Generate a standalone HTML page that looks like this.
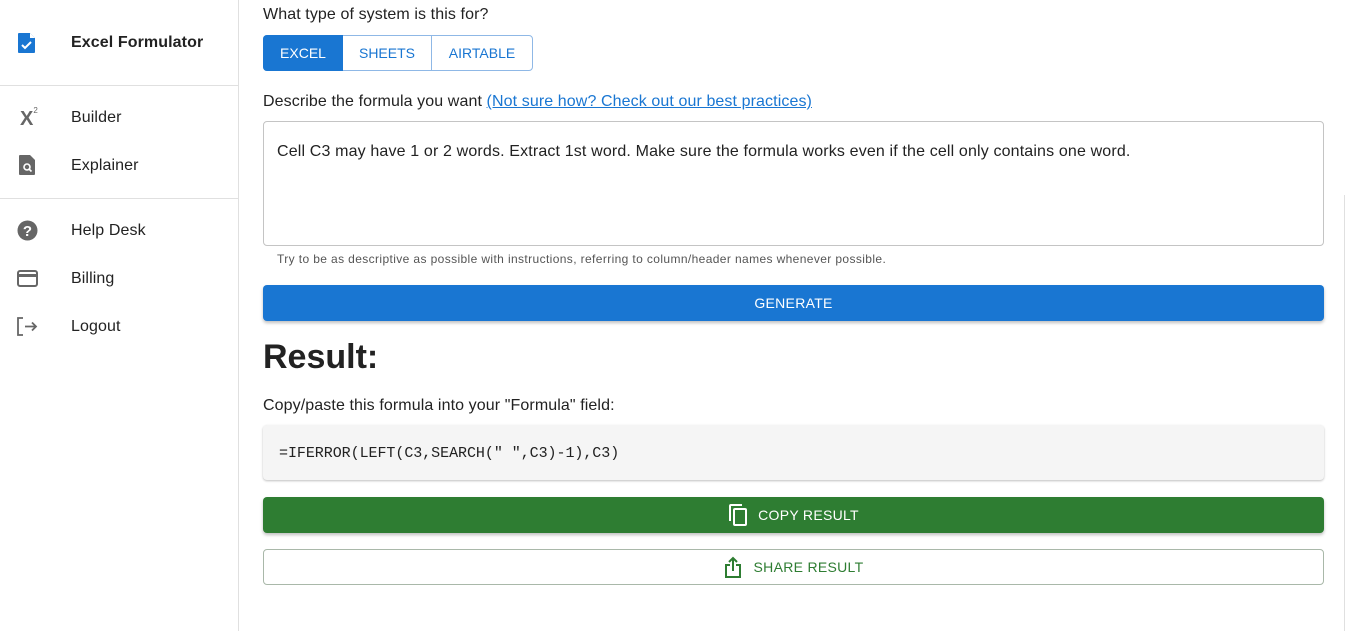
<!DOCTYPE html>
<html><head><style>
*{box-sizing:border-box;margin:0;padding:0}
body{width:1352px;height:631px;overflow:hidden;font-family:"Liberation Sans",Arial,sans-serif;background:#fff;position:relative;color:#222}
.side{position:absolute;left:0;top:0;width:239px;height:631px;border-right:1px solid #e0e0e0}
.hr{position:absolute;left:0;width:238px;height:1px;background:#e0e0e0}
.it{position:absolute;left:71px;font-size:16px;color:#222;letter-spacing:.1px}
.ic{position:absolute;left:17px}
.m{position:absolute}
.btn{position:absolute;left:263px;width:1061px;height:36px;border-radius:4px;font-size:14px;display:flex;align-items:center;justify-content:center;letter-spacing:.3px}
</style></head><body>
<div class="side">
<svg class="ic" style="top:32px" width="20" height="22" viewBox="0 0 20 22"><path d="M2 1h11l5 5v14a1 1 0 0 1-1 1H2a1 1 0 0 1-1-1V2a1 1 0 0 1 1-1z" fill="#1976d2"/><path d="M13 1v5h5z" fill="#fff"/><path d="M5 13l3 3 6-6" stroke="#fff" stroke-width="2" fill="none"/></svg>
<div class="it" style="top:34px;font-weight:bold">Excel Formulator</div>
<div class="hr" style="top:85px"></div>
<div class="ic" style="top:108px;left:20px;font-size:20px;color:#666;font-weight:bold">X<sup style="font-size:8px;position:relative;top:-4px;font-weight:normal">2</sup></div>
<div class="it" style="top:109px">Builder</div>
<svg class="ic" style="top:155px;left:19px" width="16" height="20" viewBox="0 0 16 20"><path d="M1 0h10l5 5v14a1 1 0 0 1-1 1H1a1 1 0 0 1-1-1V1a1 1 0 0 1 1-1z" fill="#666"/><circle cx="8" cy="12" r="3" fill="none" stroke="#fff" stroke-width="1.6"/><path d="M10 14l2.5 2.5" stroke="#fff" stroke-width="1.6"/></svg>
<div class="it" style="top:157px">Explainer</div>
<div class="hr" style="top:198px"></div>
<svg class="ic" style="top:220px" width="21" height="21"><circle cx="10.5" cy="10.5" r="10" fill="#666"/><text x="10.5" y="16" font-size="15" font-weight="bold" fill="#fff" text-anchor="middle" font-family="Liberation Sans">?</text></svg>
<div class="it" style="top:222px">Help Desk</div>
<svg class="ic" style="top:270px" width="21" height="17"><rect x="1" y="1" width="19" height="15" rx="2" fill="none" stroke="#666" stroke-width="2"/><rect x="1" y="4" width="19" height="3" fill="#666"/></svg>
<div class="it" style="top:270px">Billing</div>
<svg class="ic" style="top:317px" width="21" height="19"><path d="M6 1H1v17h5" fill="none" stroke="#666" stroke-width="1.8"/><path d="M8 9.5h11M15 5.5l4 4-4 4" fill="none" stroke="#666" stroke-width="1.8"/></svg>
<div class="it" style="top:318px">Logout</div>
</div>
<div class="m" style="left:263px;top:6px;font-size:16px;letter-spacing:.1px">What type of system is this for?</div>
<div class="m" style="left:263px;top:35px;width:270px;height:36px;border:1px solid #8fb8e6;border-radius:4px;display:flex;font-size:14px;color:#1976d2">
<div style="width:80px;background:#1976d2;color:#fff;display:flex;align-items:center;justify-content:center;margin:-1px 0 -1px -1px;border-radius:4px 0 0 4px">EXCEL</div>
<div style="width:89px;border-right:1px solid #8fb8e6;display:flex;align-items:center;justify-content:center">SHEETS</div>
<div style="flex:1;display:flex;align-items:center;justify-content:center">AIRTABLE</div></div>
<div class="m" style="left:263px;top:93px;font-size:16px;letter-spacing:.1px">Describe the formula you want <span style="color:#1976d2;text-decoration:underline">(Not sure how? Check out our best practices)</span></div>
<div class="m" style="left:263px;top:121px;width:1061px;height:125px;border:1px solid #c4c4c4;border-radius:4px;padding:21px 13px;font-size:16px;letter-spacing:.15px">Cell C3 may have 1 or 2 words. Extract 1st word. Make sure the formula works even if the cell only contains one word.</div>
<div class="m" style="left:277px;top:252px;font-size:12px;color:#555;letter-spacing:.38px">Try to be as descriptive as possible with instructions, referring to column/header names whenever possible.</div>
<div class="btn" style="top:285px;background:#1976d2;color:#fff;box-shadow:0 2px 3px rgba(0,0,0,.25)">GENERATE</div>
<div class="m" style="left:263px;top:338px;font-size:34px;font-weight:bold">Result:</div>
<div class="m" style="left:263px;top:397px;font-size:16px;letter-spacing:.1px">Copy/paste this formula into your "Formula" field:</div>
<div class="m" style="left:263px;top:425px;width:1061px;height:55px;background:#f5f5f5;border-radius:4px;box-shadow:0 1px 2px rgba(0,0,0,.25);padding:20px 16px;font-family:'Liberation Mono',monospace;font-size:15px;letter-spacing:-.05px">=IFERROR(LEFT(C3,SEARCH(" ",C3)-1),C3)</div>
<div class="btn" style="top:497px;background:#2e7d32;color:#fff;box-shadow:0 2px 3px rgba(0,0,0,.25)"><svg width="20" height="22" style="margin-right:10px" viewBox="0 0 20 22"><path d="M2 17V2a1 1 0 0 1 1-1h11" fill="none" stroke="#fff" stroke-width="2"/><rect x="6" y="5" width="12" height="16" rx="1" fill="none" stroke="#fff" stroke-width="2"/></svg>COPY RESULT</div>
<div class="btn" style="top:549px;border:1px solid #a9b8a9;color:#2e7d32"><svg width="18" height="22" style="margin-right:12px" viewBox="0 0 18 22"><path d="M6 9H2v12h14V9h-4" fill="none" stroke="#2e7d32" stroke-width="2"/><path d="M9 15V2M5 6l4-4 4 4" fill="none" stroke="#2e7d32" stroke-width="2"/></svg>SHARE RESULT</div>
<div class="m" style="left:1344px;top:195px;width:1px;height:436px;background:#e0e0e0"></div>
</body></html>
